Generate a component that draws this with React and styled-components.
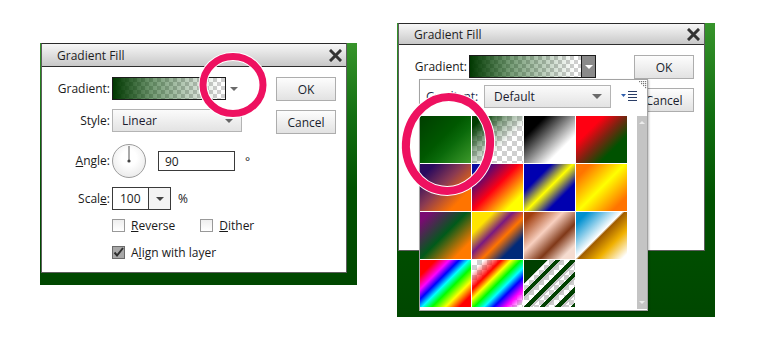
import React from "react";
import styled, { createGlobalStyle } from "styled-components";

const GlobalStyle = createGlobalStyle`
  html, body {
    margin: 0;
    padding: 0;
    background: #ffffff;
  }
  body {
    font-family: "Open Sans", "Noto Sans", sans-serif;
    color: #1a1a1a;
  }
`;

const checker = (size) =>
  `repeating-conic-gradient(#cfcfcf 0 25%, #ffffff 0 50%) 0 0 / ${size}px ${size}px`;

const PINK = "#ee1160";
const FONT = "12px";

const Page = styled.div`
  width: 775px;
  height: 342px;
  box-sizing: border-box;
  display: flex;
  align-items: flex-start;
  gap: 40px;
  padding: 23px 0 0 40px;
  overflow: hidden;
`;

const Shot = styled.div`
  position: relative;
  margin-top: ${(p) => p.$top}px;
  padding: 0 10px ${(p) => p.$bottom}px 1px;
  background: linear-gradient(180deg, #37942b 0%, #136f12 30%, #005200 60%, #004700 100%);
`;

const Dialog = styled.div`
  width: ${(p) => p.$w}px;
  height: ${(p) => p.$h}px;
  box-sizing: border-box;
  background: #ffffff;
  border: 1px solid #5e5e5e;
  border-top-color: #2a2a2a;
  display: flex;
  flex-direction: column;
  overflow: hidden;
`;

const TitleBar = styled.div`
  flex: none;
  height: ${(p) => p.$h}px;
  box-sizing: border-box;
  display: flex;
  align-items: center;
  justify-content: space-between;
  padding: 0 4px 0 15px;
  background: linear-gradient(180deg, #f7f7f7, #c8c8c8);
  border-bottom: 1px solid #2e2e2e;
  font-size: ${FONT};
  color: #1e1e1e;
`;

const CloseIcon = () => (
  <svg width="13" height="13" viewBox="0 0 13 13">
    <path d="M2 2 L11 11 M11 2 L2 11" stroke="#333" strokeWidth="3" strokeLinecap="square" />
  </svg>
);

const Body = styled.div`
  display: flex;
  align-items: flex-start;
  padding: 10px 10px 0 0;
`;

const Form = styled.div`
  flex: 1;
  display: grid;
  grid-template-columns: 68px auto;
  grid-template-rows: 23px 23px 37px 23px 12px 24px;
  column-gap: 2px;
  row-gap: 9px;
  align-items: center;
`;

const Label = styled.div`
  text-align: right;
  font-size: ${FONT};
  white-space: nowrap;
  color: #1a1a1a;
  align-self: ${(p) => (p.$end ? "end" : "center")};
  line-height: ${(p) => (p.$end ? "34px" : "normal")};
`;

const Key = styled.span`
  text-decoration: underline;
`;

const Controls = styled.div`
  display: flex;
  align-items: center;
  align-self: ${(p) => (p.$end ? "end" : "center")};
  grid-column: ${(p) => (p.$span ? "2" : "auto")};
`;

const GradientBox = styled.div`
  display: flex;
  width: ${(p) => p.$w}px;
  height: 23px;
  box-sizing: border-box;
  border: 1px solid #1c1c1c;
`;

const Swatch = styled.div`
  flex: 1;
  background: linear-gradient(90deg, #003800 0%, rgba(0, 70, 0, 0.55) 35%, rgba(0, 70, 0, 0) 95%),
    ${checker(8)};
`;

const SwatchButton = styled.div`
  width: 13px;
  flex: none;
  display: flex;
  align-items: center;
  justify-content: center;
  background: #8a8a8a;
  border-left: 1px solid #1c1c1c;
`;

const Tri = styled.span`
  display: block;
  width: 0;
  height: 0;
  border-left: ${(p) => p.$s}px solid transparent;
  border-right: ${(p) => p.$s}px solid transparent;
  border-top: ${(p) => p.$s}px solid ${(p) => p.$c};
  margin-left: ${(p) => p.$ml || 0}px;
`;

const Select = styled.div`
  width: ${(p) => p.$w}px;
  flex: none;
  height: 23px;
  box-sizing: border-box;
  display: flex;
  align-items: center;
  justify-content: space-between;
  padding: 0 8px 0 9px;
  border: 1px solid #b4b4b4;
  background: linear-gradient(180deg, #fbfbfb, #e3e3e3);
  font-size: ${FONT};
  color: #1a1a2e;
`;

const Dial = styled.div`
  width: 34px;
  height: 34px;
  box-sizing: border-box;
  border-radius: 50%;
  border: 1px solid #9c9c9c;
  background: radial-gradient(circle at 50% 40%, #ffffff 30%, #e2e2e2 100%);
  display: flex;
`;

const NumberBox = styled.div`
  width: ${(p) => p.$w}px;
  height: ${(p) => p.$h}px;
  box-sizing: border-box;
  margin-left: ${(p) => p.$ml || 0}px;
  border: 1px solid #3a3a3a;
  display: flex;
  align-items: center;
  font-size: ${FONT};
  color: #1a1a1a;
`;

const NumberText = styled.span`
  flex: 1;
  padding-left: ${(p) => p.$pl}px;
`;

const ComboButton = styled.div`
  width: 21px;
  align-self: stretch;
  display: flex;
  align-items: center;
  justify-content: center;
  border-left: 1px solid #3a3a3a;
  background: #f3f3f3;
`;

const Unit = styled.span`
  font-size: ${FONT};
  margin-left: ${(p) => p.$ml}px;
`;

const CheckRow = styled.div`
  display: flex;
  align-items: center;
  gap: 25px;
`;

const CheckItem = styled.label`
  display: flex;
  align-items: center;
  gap: 6px;
  font-size: ${FONT};
  color: #1a1a1a;
`;

const Box = styled.span`
  width: 13px;
  height: 13px;
  box-sizing: border-box;
  display: flex;
  border: 1px solid ${(p) => (p.$on ? "#6a6a6a" : "#999999")};
  background: ${(p) => (p.$on ? "#a8a8a8" : "linear-gradient(180deg, #eeeeee, #ffffff)")};
`;

const ButtonCol = styled.div`
  display: flex;
  flex-direction: column;
  gap: 9px;
`;

const Button = styled.div`
  width: 60px;
  height: 24px;
  box-sizing: border-box;
  display: flex;
  align-items: center;
  justify-content: center;
  border: 1px solid #adadad;
  background: linear-gradient(180deg, #fdfdfd, #e2e2e2);
  font-size: ${FONT};
  color: #1a1f2e;
`;

const Popup = styled.div`
  position: absolute;
  left: 22px;
  top: 56px;
  width: 229px;
  height: 232px;
  box-sizing: border-box;
  background: #ffffff;
  border: 1px solid #a3a3a3;
  box-shadow: 1px 1px 2px rgba(0, 0, 0, 0.25);
  display: flex;
  flex-direction: column;
`;

const PopupHeader = styled.div`
  height: 36px;
  flex: none;
  box-sizing: border-box;
  display: flex;
  align-items: flex-start;
  padding: 5px 0 0 6px;
`;

const PopupLabel = styled.span`
  flex: none;
  width: 53px;
  margin-right: 5px;
  overflow: hidden;
  white-space: nowrap;
  font-size: ${FONT};
  line-height: 23px;
  color: #1a2a4a;
`;

const MenuButton = styled.div`
  height: 23px;
  display: flex;
  align-items: center;
  margin-left: 10px;
`;

const PopupMain = styled.div`
  flex: 1;
  display: flex;
  justify-content: space-between;
`;

const Presets = styled.div`
  display: grid;
  grid-template-columns: repeat(4, 51px);
  grid-auto-rows: 47px;
  gap: 1px;
  align-content: start;
`;

const Preset = styled.div`
  background: ${(p) => p.$bg};
`;

const Scrollbar = styled.div`
  width: 10px;
  margin-bottom: 1px;
  display: flex;
  flex-direction: column;
  justify-content: space-between;
  align-items: center;
  padding: 5px 0;
  box-sizing: border-box;
  background: #c4c4c4;
`;

const ScrollArrow = styled.span`
  width: 0;
  height: 0;
  border-left: 3px solid transparent;
  border-right: 3px solid transparent;
  ${(p) => (p.$up ? "border-bottom: 3px solid #ececec;" : "border-top: 3px solid #ececec;")}
`;

const Grip = styled.svg`
  position: absolute;
  right: 0;
  top: 0;
`;

const Ring = styled.svg`
  position: absolute;
  left: ${(p) => p.$x}px;
  top: ${(p) => p.$y}px;
  overflow: visible;
  pointer-events: none;
`;

const presets = [
  "linear-gradient(135deg, #003e00 0%, #005800 45%, #0a6a0a 62%, #3f9a2c 100%)",
  `linear-gradient(135deg, #003c00 12%, rgba(0, 60, 0, 0.4) 38%, rgba(0, 60, 0, 0) 62%), ${checker(10)}`,
  "linear-gradient(135deg, #000000 22%, #ffffff 72%)",
  "linear-gradient(135deg, #ff0012 28%, #7a2410 50%, #005200 72%)",
  "linear-gradient(135deg, #2a0a5e 15%, #8a3a52 45%, #ff7400 78%)",
  "linear-gradient(135deg, #0a0aa0 10%, #ff0012 48%, #ffff00 82%)",
  "linear-gradient(135deg, #0000b0 28%, #ffff00 50%, #0000b0 72%)",
  "linear-gradient(135deg, #ff7400 15%, #ffff00 50%, #ff7400 85%)",
  "linear-gradient(135deg, #7a0a72 10%, #005a1a 48%, #ff7a00 82%)",
  "linear-gradient(135deg, #ffe400 22%, #7a1a80 42%, #ff7400 58%, #002a7a 78%)",
  "linear-gradient(135deg, #a23e0e 10%, #f8d0c0 40%, #803818 64%, #f5dcd0 86%)",
  "linear-gradient(135deg, #0090d0 12%, #ffffff 47%, #a05c00 50%, #f0b000 70%, #ffffff 95%)",
  "linear-gradient(135deg, #ff0000 16%, #ff00ff 30%, #0000ff 40%, #00ffff 50%, #00ff00 60%, #ffff00 74%, #ff0000 88%)",
  `linear-gradient(135deg, rgba(255,0,0,0) 12%, #ff0000 30%, #ffff00 40%, #00ff00 50%, #00ffff 60%, #0000ff 70%, #ff00ff 82%, rgba(255,0,255,0) 96%), ${checker(10)}`,
  `linear-gradient(135deg, #004000 24%, rgba(0,64,0,0) 24%), repeating-linear-gradient(135deg, #004000 0 4px, rgba(190,190,190,0.85) 4px 6px, rgba(0,0,0,0) 6px 11px), ${checker(10)}`,
];

const GradientControl = ({ open }) =>
  open ? (
    <GradientBox $w={127}>
      <Swatch />
      <SwatchButton>
        <Tri $s={4} $c="#ffffff" />
      </SwatchButton>
    </GradientBox>
  ) : (
    <>
      <GradientBox $w={114}>
        <Swatch />
      </GradientBox>
      <Tri $s={4} $c="#6a6a6a" $ml={4} />
    </>
  );

// the lower rows sit under the preset popup when it is open, so they are only drawn when closed
const LowerRows = () => (
  <>
    <Label>Style:</Label>
    <Controls>
      <Select $w={130}>
        <span>Linear</span>
        <Tri $s={4} $c="#666666" />
      </Select>
    </Controls>

    <Label $end>
      <Key>A</Key>ngle:
    </Label>
    <Controls $end>
      <Dial>
        <svg width="32" height="32" viewBox="0 0 32 32">
          <line x1="16" y1="16" x2="16" y2="1" stroke="#555" strokeWidth="1" />
          <circle cx="16" cy="16" r="1.6" fill="#444" />
        </svg>
      </Dial>
      <NumberBox $w={77} $h={20} $ml={12}>
        <NumberText $pl={6}>90</NumberText>
      </NumberBox>
      <Unit $ml={10}>°</Unit>
    </Controls>

    <Label>
      Scal<Key>e</Key>:
    </Label>
    <Controls>
      <NumberBox $w={59} $h={23}>
        <NumberText $pl={7}>100</NumberText>
        <ComboButton>
          <Tri $s={4} $c="#444444" />
        </ComboButton>
      </NumberBox>
      <Unit $ml={7}>%</Unit>
    </Controls>

    <Controls $span>
      <CheckRow>
        <CheckItem>
          <Box />
          <span>
            <Key>R</Key>everse
          </span>
        </CheckItem>
        <CheckItem>
          <Box />
          <span>
            <Key>D</Key>ither
          </span>
        </CheckItem>
      </CheckRow>
    </Controls>

    <Controls $span>
      <CheckItem>
        <Box $on>
          <svg width="11" height="11" viewBox="0 0 11 11">
            <path d="M1.5 5.5 L4 8.5 L10 1" fill="none" stroke="#2e2e2e" strokeWidth="2" />
          </svg>
        </Box>
        <span>
          A<Key>l</Key>ign with layer
        </span>
      </CheckItem>
    </Controls>
  </>
);

const GradientDialog = ({ width, height, titleHeight, open }) => (
  <Dialog $w={width} $h={height}>
    <TitleBar $h={titleHeight}>
      <span>Gradient Fill</span>
      <CloseIcon />
    </TitleBar>
    <Body>
      <Form>
        <Label>Gradient:</Label>
        <Controls>
          <GradientControl open={open} />
        </Controls>
        {!open && <LowerRows />}
      </Form>
      <ButtonCol>
        <Button>OK</Button>
        <Button>Cancel</Button>
      </ButtonCol>
    </Body>
  </Dialog>
);

const PresetPicker = () => (
  <Popup>
    <PopupHeader>
      <PopupLabel>Gradient:</PopupLabel>
      <Select $w={127}>
        <span>Default</span>
        <Tri $s={5} $c="#6a6a6a" />
      </Select>
      <MenuButton>
        <svg width="17" height="13" viewBox="0 0 17 13">
          <path d="M0 4 L5 4 L2.5 7 Z" fill="#2f5fae" />
          <path d="M7 1.5 H16 M7 4.5 H16 M7 7.5 H16 M7 10.5 H16" stroke="#2a3d66" strokeWidth="1" />
        </svg>
      </MenuButton>
    </PopupHeader>
    <PopupMain>
      <Presets>
        {presets.map((bg, i) => (
          <Preset key={i} $bg={bg} />
        ))}
      </Presets>
      <Scrollbar>
        <ScrollArrow $up />
        <ScrollArrow />
      </Scrollbar>
    </PopupMain>
    <Grip width="9" height="9" viewBox="0 0 9 9">
      {[
        [7, 1], [5, 1], [7, 3], [3, 1], [5, 3], [7, 5], [1, 1], [3, 3], [5, 5], [7, 7],
      ].map(([x, y], i) => (
        <rect key={i} x={x} y={y} width="1.2" height="1.2" fill="#777" />
      ))}
    </Grip>
  </Popup>
);

const Highlight = ({ x, y, w, h, rx, ry, stroke, rotate = 0 }) => (
  <Ring $x={x} $y={y} width={w} height={h} viewBox={`0 0 ${w} ${h}`}>
    <g transform={`rotate(${rotate} ${w / 2} ${h / 2})`}>
      <ellipse cx={w / 2} cy={h / 2} rx={rx} ry={ry} fill="none" stroke="#ffffff" strokeWidth={stroke + 2} />
      <ellipse cx={w / 2} cy={h / 2} rx={rx} ry={ry} fill="none" stroke={PINK} strokeWidth={stroke} />
    </g>
  </Ring>
);

const App = () => (
  <>
    <GlobalStyle />
    <Page>
      <Shot $top={20} $bottom={12}>
        <GradientDialog width={306} height={230} titleHeight={23} />
        <Highlight x={155} y={6} w={76} h={72} rx={30} ry={28.5} stroke={7} />
      </Shot>
      <Shot $top={0} $bottom={66}>
        <GradientDialog width={307} height={228} titleHeight={21} open />
        <PresetPicker />
        <Highlight x={-1} y={64} w={104} h={114} rx={42} ry={47} stroke={8} rotate={8} />
      </Shot>
    </Page>
  </>
);

export default App;
